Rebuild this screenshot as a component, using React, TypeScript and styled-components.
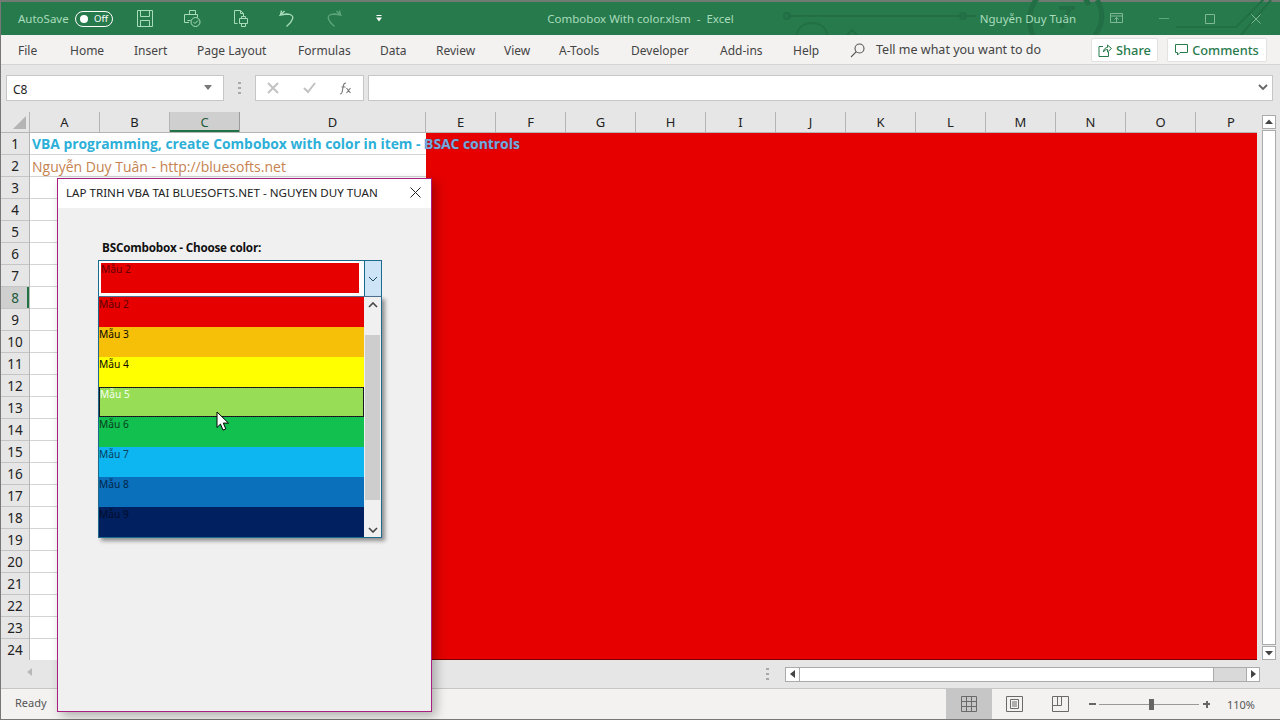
import React from 'react';
import styled, { createGlobalStyle } from 'styled-components';

const GlobalStyle = createGlobalStyle`
  html, body {
    margin: 0;
    padding: 0;
    background: #e6e6e6;
    overflow: hidden;
  }
  * { box-sizing: border-box; }
`;

const uiFont = `"Noto Sans", "Open Sans", sans-serif`;

const Page = styled.div`
  position: relative;
  width: 1280px;
  height: 720px;
  overflow: hidden;
  display: flex;
  flex-direction: column;
  font-family: ${uiFont};
  color: #333;
  background: #e6e6e6;
  border-left: 1px solid #777;
`;

const TitleBar = styled.div`
  position: relative;
  height: 35px;
  flex: none;
  display: grid;
  grid-template-columns: 1fr auto 1fr;
  align-items: center;
  background: #277a4c;
  border-top: 2px solid #6e7a72;
  color: #a9dcbc;
  font-size: 11.5px;
`;

const Circuit = styled.svg`
  position: absolute;
  left: 770px;
  top: -2px;
  pointer-events: none;
`;

const QuickAccess = styled.div`
  display: flex;
  align-items: center;
  padding-left: 17px;
`;

const AutoSave = styled.span`
  width: 57px;
`;

const Toggle = styled.div`
  width: 38px;
  height: 16px;
  margin-right: 24px;
  display: flex;
  align-items: center;
  gap: 6px;
  padding-left: 4px;
  border: 1px solid #fff;
  border-radius: 8px;
  color: #fff;
  font-size: 9.5px;
  &::before {
    content: '';
    width: 8px;
    height: 8px;
    border-radius: 50%;
    background: #fff;
  }
`;

const QatIcon = styled.svg<{ $gap: number }>`
  margin-right: ${p => p.$gap}px;
  flex: none;
`;

const DocTitle = styled.div`
  position: relative;
  text-align: center;
  white-space: pre;
`;

const WindowControls = styled.div`
  position: relative;
  display: flex;
  align-items: center;
  justify-content: flex-end;
  padding-right: 19px;
`;

const UserName = styled.span`
  margin-right: 34px;
`;

const TabsBar = styled.div`
  height: 30px;
  flex: none;
  display: flex;
  align-items: center;
  padding: 1px 0 0 17px;
  background: #f3f2f1;
  border-bottom: 1px solid #d4d4d4;
  font-size: 12px;
`;

const Tab = styled.span<{ $width: number }>`
  width: ${p => p.$width}px;
  flex: none;
  color: #444;
  white-space: nowrap;
`;

const TellMe = styled.span`
  width: 215px;
  margin: 0 0 2px 11px;
  flex: none;
  color: #444;
  font-size: 12.5px;
`;

const RibbonButton = styled.div<{ $width: number }>`
  width: ${p => p.$width}px;
  height: 24px;
  margin-right: 9px;
  flex: none;
  display: flex;
  align-items: center;
  justify-content: center;
  gap: 4px;
  background: #fff;
  border: 1px solid #e2e2e2;
  border-radius: 2px;
  color: #277a4c;
  font-size: 12.8px;
  font-weight: 500;
`;

const FormulaRow = styled.div`
  height: 47px;
  flex: none;
  display: flex;
  align-items: flex-start;
  padding: 10px 0 0 5px;
  background: #e6e6e6;
`;

const FieldBox = styled.div<{ $width: number }>`
  width: ${p => p.$width}px;
  height: 26px;
  flex: none;
  display: flex;
  align-items: center;
  background: #fff;
  border: 1px solid #c6c6c6;
  font-size: 12px;
`;

const FormulaField = styled(FieldBox)`
  margin-left: 4px;
`;

const NameValue = styled.span`
  flex: 1;
  padding: 2px 0 0 6px;
  color: #222;
`;

const Grip = styled.div`
  width: 31px;
  flex: none;
  height: 26px;
  display: flex;
  align-items: center;
  justify-content: center;
`;

const FormulaButtons = styled.div`
  width: 100%;
  display: flex;
  align-items: center;
  justify-content: space-between;
  padding: 0 11px;
`;

const Workbook = styled.div`
  height: 548px;
  flex: none;
  display: flex;
`;

const SheetPane = styled.div`
  width: 1256px;
  flex: none;
  display: flex;
  flex-direction: column;
`;

const ColumnHeader = styled.div`
  height: 21px;
  flex: none;
  display: flex;
  background: #e6e6e6;
  border-bottom: 1px solid #b5b5b5;
  font-size: 13px;
  color: #222;
`;

const CornerCell = styled.div`
  width: 29px;
  flex: none;
  display: flex;
  align-items: flex-end;
  justify-content: flex-end;
  padding: 0 3px 3px 0;
  border-right: 1px solid #b5b5b5;
  &::after {
    content: '';
    border-style: solid;
    border-width: 0 0 13px 13px;
    border-color: transparent transparent #b4b4b4 transparent;
  }
`;

const ColumnCell = styled.div<{ $width: number; $active?: boolean }>`
  width: ${p => p.$width}px;
  flex: none;
  display: flex;
  align-items: center;
  justify-content: center;
  border-right: 1px solid ${p => (p.$active ? '#9b9b9b' : '#b5b5b5')};
  background: ${p => (p.$active ? '#cfcfcf' : 'transparent')};
  color: ${p => (p.$active ? '#1f5c3c' : '#222')};
  box-shadow: ${p => (p.$active ? 'inset 0 -2px 0 #217346' : 'none')};
`;

/* the last column is cut off by the scroll bar */
const ClippedColumn = styled(ColumnCell)`
  padding-left: 10px;
  border-right: 0;
`;

const Sheet = styled.div`
  flex: 1;
  min-height: 0;
  display: flex;
  overflow: hidden;
`;

const RowHeaders = styled.div`
  width: 29px;
  flex: none;
  display: grid;
  grid-auto-rows: 22px;
  align-content: start;
  border-right: 1px solid #b5b5b5;
`;

const RowLabel = styled.div<{ $active?: boolean }>`
  display: flex;
  align-items: center;
  justify-content: center;
  font-size: 13.5px;
  color: ${p => (p.$active ? '#1f5c3c' : '#222')};
  background: ${p => (p.$active ? '#cfcfcf' : '#e6e6e6')};
  border-bottom: 1px solid #c4c4c4;
  box-shadow: ${p => (p.$active ? 'inset -2px 0 0 #217346' : 'none')};
`;

const CellArea = styled.div`
  position: relative;
  z-index: 1;
  width: 396px;
  flex: none;
  display: grid;
  grid-template-columns: 396px;
  grid-auto-rows: 22px;
  align-content: start;
  background: #fff;
`;

const CellRow = styled.div`
  min-width: 0;
  border-bottom: 1px solid #d4d4d4;
  padding-left: 2px;
  display: flex;
  align-items: center;
  white-space: nowrap;
`;

const HeadingText = styled.span`
  font-family: "Open Sans", sans-serif;
  font-weight: 700;
  font-size: 13.85px;
  color: #2db0d8;
`;

const HeadingOnRed = styled.span`
  color: #7ea8dc;
  text-shadow: 0 0 1px #223a66;
`;

const AuthorText = styled.span`
  padding-top: 1px;
  font-family: "Open Sans", sans-serif;
  font-size: 14px;
  color: #c6824f;
`;

const RedFill = styled.div`
  flex: 1;
  background: #e60000;
  border-bottom: 1px solid #700;
`;

const VScroll = styled.div`
  flex: 1;
  display: flex;
  flex-direction: column;
  padding: 3px 4px 0 5px;
  background: #e6e6e6;
`;

const VThumb = styled.div`
  flex: 1;
  margin: 1px 0;
  background: #fff;
  border: 1px solid #ababab;
`;

const ScrollButton = styled.div`
  height: 14px;
  flex: none;
  display: flex;
  align-items: center;
  justify-content: center;
  background: #fff;
  border: 1px solid #ababab;
`;

const BottomBar = styled.div`
  height: 28px;
  flex: none;
  display: flex;
  align-items: center;
  background: #e6e6e6;
  padding-left: 26px;
`;

const SheetArrow = styled.div`
  margin-bottom: 4px;
  border-style: solid;
  border-width: 4px 5px 4px 0;
  border-color: transparent #b8b8b8 transparent transparent;
`;

const BarSpacer = styled.div`
  flex: 1;
`;

const HScroll = styled.div`
  width: 475px;
  height: 15px;
  flex: none;
  margin-right: 20px;
  margin-left: 16px;
  display: flex;
  background: #d9d9d9;
  border: 1px solid #ababab;
  border-right: 0;
`;

const HButton = styled.div`
  width: 14px;
  flex: none;
  display: flex;
  align-items: center;
  justify-content: center;
  background: #fff;
  border-right: 1px solid #ababab;
`;

const HThumb = styled.div`
  width: 414px;
  flex: none;
  background: #fff;
  border-right: 1px solid #ababab;
`;

const HEnd = styled(HButton)`
  margin-left: auto;
  border-left: 1px solid #ababab;
  border-right: 1px solid #ababab;
`;

const StatusBar = styled.div`
  flex: 1;
  display: flex;
  align-items: stretch;
  background: #f3f2f1;
  border-top: 1px solid #c6c6c6;
  border-bottom: 1px solid #777;
  font-size: 11px;
  color: #555;
`;

const ReadyText = styled.span`
  padding: 0 0 4px 14px;
  flex: 1;
  align-self: center;
`;

const ViewButton = styled.div<{ $active?: boolean; $width: number }>`
  width: ${p => p.$width}px;
  flex: none;
  display: flex;
  align-items: center;
  justify-content: center;
  background: ${p => (p.$active ? '#c6c6c6' : 'transparent')};
`;

const ZoomControl = styled.div`
  flex: none;
  margin-left: 6px;
  display: flex;
  align-items: center;
  gap: 3px;
`;

const ZoomSign = styled.span`
  width: 7px;
  height: 2px;
  flex: none;
  background: #666;
  position: relative;
`;

const ZoomPlus = styled(ZoomSign)`
  margin-left: 1px;
  &::after {
    content: '';
    position: absolute;
    left: 2.5px;
    top: -2.5px;
    width: 2px;
    height: 7px;
    background: #666;
  }
`;

const ZoomTrack = styled.div`
  width: 100px;
  height: 1px;
  flex: none;
  background: #999;
  position: relative;
`;

const ZoomThumb = styled.div`
  position: absolute;
  left: 50px;
  top: -5px;
  width: 5px;
  height: 11px;
  background: #666;
`;

const ZoomValue = styled.span`
  width: 62px;
  margin-right: 8px;
  flex: none;
  align-self: center;
  text-align: center;
`;

/* the userform floats over the sheet */
const Dialog = styled.div`
  position: absolute;
  z-index: 2;
  left: 56px;
  top: 178px;
  width: 375px;
  height: 534px;
  display: flex;
  flex-direction: column;
  background: #f0f0f0;
  border: 1px solid #a8207f;
  box-shadow: 4px 4px 10px rgba(0, 0, 0, 0.28);
`;

const DialogTitle = styled.div`
  height: 29px;
  flex: none;
  display: flex;
  align-items: center;
  justify-content: space-between;
  padding: 0 10px 2px 8px;
  background: #fff;
  font-size: 11.6px;
  color: #222;
`;

const DialogBody = styled.div`
  position: relative;
  flex: 1;
  padding: 31px 49px 0 40px;
`;

const FieldLabel = styled.div`
  height: 20px;
  padding-left: 4px;
  font-family: "Open Sans", sans-serif;
  font-size: 11.7px;
  font-weight: 700;
  letter-spacing: -0.2px;
  color: #111;
`;

const Combo = styled.div`
  width: 284px;
  height: 37px;
  margin-top: 1px;
  display: flex;
  background: #fff;
  border: 1px solid #1c6a8e;
`;

const ComboValue = styled.div`
  width: 258px;
  height: 30px;
  margin: 2px 0 0 2px;
  flex: none;
  background: #e60000;
  font-size: 10.2px;
  line-height: 13px;
  color: #6b0000;
`;

const ComboArrow = styled.div`
  width: 17px;
  margin-left: auto;
  flex: none;
  display: flex;
  align-items: center;
  justify-content: center;
  background: #cde3f6;
  border-left: 1px solid #1c6a8e;
`;

const ColorList = styled.div`
  position: absolute;
  left: 40px;
  top: 88px;
  width: 284px;
  height: 242px;
  display: flex;
  background: #fff;
  border: 1px solid #1c6a8e;
  border-top: 1px solid #4f6d8c;
  box-shadow: 3px 3px 4px rgba(0, 0, 0, 0.4);
`;

const ItemColumn = styled.div`
  width: 265px;
  flex: none;
  display: grid;
  grid-auto-rows: 30px;
`;

const ColorItem = styled.div<{ $color: string; $text: string; $focus?: boolean }>`
  background: ${p => p.$color};
  color: ${p => p.$text};
  font-size: 10.2px;
  line-height: 15px;
  white-space: nowrap;
  outline: ${p => (p.$focus ? '1px dotted #111' : 'none')};
  outline-offset: -1px;
  padding-left: ${p => (p.$focus ? '1px' : '0')};
  box-shadow: ${p => (p.$focus ? 'inset 0 0 0 1px #223' : 'none')};
`;

const ListScroll = styled.div`
  flex: 1;
  display: flex;
  flex-direction: column;
  background: #f0f0f0;
`;

const ListArrow = styled.div`
  height: 38px;
  flex: none;
  display: flex;
  justify-content: center;
  align-items: flex-start;
  padding: 5px 0;
`;

const ListArrowEnd = styled(ListArrow)`
  align-items: flex-end;
`;

const ListThumb = styled.div`
  height: 165px;
  flex: none;
  margin: 0 1px;
  background: #cdcdcd;
`;

const Pointer = styled.svg`
  position: absolute;
  z-index: 3;
  left: 215px;
  top: 411px;
`;

const tabs: [string, number][] = [
  ['File', 52], ['Home', 64], ['Insert', 63], ['Page Layout', 101], ['Formulas', 82],
  ['Data', 56], ['Review', 68], ['View', 55], ['A-Tools', 72], ['Developer', 89],
  ['Add-ins', 73], ['Help', 57],
];

const columns: [string, number][] = [
  ['A', 70], ['B', 70], ['C', 70], ['D', 186], ['E', 70], ['F', 70], ['G', 70], ['H', 70],
  ['I', 70], ['J', 70], ['K', 70], ['L', 70], ['M', 70], ['N', 70], ['O', 70],
];

const items = [
  { name: 'Mẫu 2', color: '#e60000', text: '#5c0000' },
  { name: 'Mẫu 3', color: '#f6bf08', text: '#0a0800' },
  { name: 'Mẫu 4', color: '#ffff00', text: '#0a0a00' },
  { name: 'Mẫu 5', color: '#97dd55', text: '#f4fff0', focus: true },
  { name: 'Mẫu 6', color: '#12c050', text: '#07401c' },
  { name: 'Mẫu 7', color: '#0db6f0', text: '#06405c' },
  { name: 'Mẫu 8', color: '#0a70bc', text: '#03274a' },
  { name: 'Mẫu 9', color: '#002060', text: '#000d2c' },
];

const rows = Array.from({ length: 24 }, (_, i) => i + 1);

const Chevron = ({ up, thin }: { up?: boolean; thin?: boolean }) => (
  <svg width="10" height="6" viewBox="0 0 10 6">
    <path
      d={up ? 'M1 5l4-4 4 4' : 'M1 1l4 4 4-4'}
      fill="none"
      stroke={thin ? '#1c4a62' : '#444'}
      strokeWidth={thin ? 1 : 1.6}
    />
  </svg>
);

const Tri = ({ d }: { d: string }) => (
  <svg width="8" height="8" viewBox="0 0 8 8">
    <path d={d} fill="#444" />
  </svg>
);

export default function App() {
  return (
    <Page>
      <GlobalStyle />
      <TitleBar>
        <Circuit width="510" height="35" viewBox="0 0 510 35" fill="none" stroke="#226f45" strokeWidth="2">
          <path d="M16 16H205" />
          <circle cx="16" cy="16" r="3" />
          <circle cx="192" cy="16" r="3" />
          <path d="M26 35a15 12 0 0 1 30 0M76 35l5-5 5 5" />
          <path d="M262 35a30 32 0 0 1 56-30M324 35a30 30 0 0 0 2-35" strokeWidth="5" />
          <path d="M300 6l-10 22M288 8h16" strokeWidth="4" />
          <path d="M405 27h60l32-32M470 35l30-35" />
        </Circuit>
        <QuickAccess>
          <AutoSave>AutoSave</AutoSave>
          <Toggle>Off</Toggle>
          <QatIcon $gap={31} width="16" height="17" viewBox="0 0 16 17" fill="none" stroke="#a9dcbc">
            <path d="M.5.5h15v16H.5zM3.500.5v6h9v-6M3.500 16.500v-6h9v6" />
          </QatIcon>
          <QatIcon $gap={32} width="17" height="17" viewBox="0 0 17 17" fill="none" stroke="#a9dcbc">
            <path d="M5.500 4.500v-4h6v4M.5 4.500h13v3M5 12.500H.5v-8M3.500 10.500h3" />
            <circle cx="11.500" cy="12" r="4.500" />
            <path d="M9.500 12l1.500 1.500 3-3" />
          </QatIcon>
          <QatIcon $gap={30} width="16" height="17" viewBox="0 0 16 17" fill="none" stroke="#a9dcbc">
            <path d="M4.500 13.500h-3v-13h6l3 3v3M7.500.5v3h3M6.500 8.500h8v5h-8zM8.500 8.500v-2h4v2M8.500 13.500v3h4v-3" />
          </QatIcon>
          <QatIcon $gap={31} width="16" height="17" viewBox="0 0 16 17" fill="none" stroke="#a9dcbc" strokeWidth="1.300">
            <path d="M5.500 1L1.500 5l6-1c5 0 7 2 6 5-1 3-4 6-6 7.500M1.500 5l1-4.500" />
          </QatIcon>
          <QatIcon $gap={34} width="16" height="17" viewBox="0 0 16 17" fill="none" stroke="#5ea67d" strokeWidth="1.300">
            <path d="M10.500 1l4 4-6-1c-5 0-7 2-6 5 1 3 4 6 6 7.500M14.500 5l-1-4.500" />
          </QatIcon>
          <QatIcon $gap={0} width="6" height="7" viewBox="0 0 6 7" fill="#fff">
            <path d="M.5 0h5v1h-5zM0 2.500h6L3 6.500z" />
          </QatIcon>
        </QuickAccess>
        <DocTitle>Combobox With color.xlsm  -  Excel</DocTitle>
        <WindowControls>
          <UserName>Nguyễn Duy Tuân</UserName>
          <QatIcon $gap={36} width="13" height="11" viewBox="0 0 13 11" fill="none" stroke="#7fb896">
            <path d="M.5.5h12v9H.5zM.5 3h12M6.500 9V4.500M4.500 6.500l2-2 2 2" />
          </QatIcon>
          <QatIcon $gap={36} width="10" height="3" viewBox="0 0 10 3" fill="none" stroke="#5ea67d">
            <path d="M0 1.500h10" />
          </QatIcon>
          <QatIcon $gap={36} width="10" height="10" viewBox="0 0 10 10" fill="none" stroke="#7fb896">
            <path d="M.5.5h9v9h-9z" />
          </QatIcon>
          <QatIcon $gap={0} width="10" height="10" viewBox="0 0 10 10" fill="none" stroke="#7fb896">
            <path d="M.5.5l9 9M9.500.5l-9 9" />
          </QatIcon>
        </WindowControls>
      </TitleBar>

      <TabsBar>
        {tabs.map(([label, width]) => (
          <Tab key={label} $width={width}>{label}</Tab>
        ))}
        <svg width="15" height="15" viewBox="0 0 15 15" fill="none" stroke="#555" strokeWidth="1.100">
          <circle cx="9.500" cy="5.500" r="4.500" />
          <path d="M6.300 8.700L1 14" />
        </svg>
        <TellMe>Tell me what you want to do</TellMe>
        <RibbonButton $width={67}>
          <svg width="14" height="13" viewBox="0 0 14 13" fill="none" stroke="#277a4c">
            <path d="M5 2.500H1v10h9.500V8M5.500 8c0-3 2-4.500 4-4.500V1l4 3.500-4 3.500V5.500c-2 0-3.500 1-4 2.500z" />
          </svg>
          Share
        </RibbonButton>
        <RibbonButton $width={100}>
          <svg width="13" height="12" viewBox="0 0 13 12" fill="none" stroke="#277a4c">
            <path d="M.5.5h12v8H5L2.500 11V8.500h-2z" />
          </svg>
          Comments
        </RibbonButton>
      </TabsBar>

      <FormulaRow>
        <FieldBox $width={218}>
          <NameValue>C8</NameValue>
          <svg width="26" height="6" viewBox="0 0 26 6">
            <path d="M7 0h8l-4 5z" fill="#777" />
          </svg>
        </FieldBox>
        <Grip>
          <svg width="3" height="13" viewBox="0 0 3 13" fill="#a8a8a8">
            <path d="M0 0h3v2H0zM0 5h3v2H0zM0 10h3v2H0z" />
          </svg>
        </Grip>
        <FieldBox $width={109}>
          <FormulaButtons>
            <svg width="12" height="12" viewBox="0 0 12 12" fill="none" stroke="#c2c2c2" strokeWidth="2">
              <path d="M1 1l10 10M11 1L1 11" />
            </svg>
            <svg width="13" height="12" viewBox="0 0 13 12" fill="none" stroke="#c2c2c2" strokeWidth="2">
              <path d="M1 6l4 4 7-9" />
            </svg>
            <svg width="13" height="13" viewBox="0 0 13 13" fill="none" stroke="#777" strokeWidth="1.100">
              <path d="M1 12c2 0 2-1 2.500-4L4.500 3c.4-1.500 1-2 2.500-2M2.500 5h4M7.500 6l4 5M11.500 6l-4 5" />
            </svg>
          </FormulaButtons>
        </FieldBox>
        <FormulaField $width={905}>
          <NameValue />
          <svg width="20" height="8" viewBox="0 0 20 8" fill="none" stroke="#666" strokeWidth="1.800">
            <path d="M7 1l4 4 4-4" />
          </svg>
        </FormulaField>
      </FormulaRow>

      <Workbook>
        <SheetPane>
          <ColumnHeader>
            <CornerCell />
            {columns.map(([label, width]) => (
              <ColumnCell key={label} $width={width} $active={label === 'C'}>{label}</ColumnCell>
            ))}
            <ClippedColumn $width={60}>P</ClippedColumn>
          </ColumnHeader>
          <Sheet>
            <RowHeaders>
              {rows.map(n => (
                <RowLabel key={n} $active={n === 8}>{n}</RowLabel>
              ))}
            </RowHeaders>
            <CellArea>
              {rows.map(n => (
                <CellRow key={n}>
                  {n === 1 && (
                    <HeadingText>
                      VBA programming, create Combobox with color in item - <HeadingOnRed>BSAC controls</HeadingOnRed>
                    </HeadingText>
                  )}
                  {n === 2 && <AuthorText>Nguyễn Duy Tuân - http://bluesofts.net</AuthorText>}
                </CellRow>
              ))}
            </CellArea>
            <RedFill />
          </Sheet>
        </SheetPane>
        <VScroll>
          <ScrollButton><Tri d="M4 1.500L8 6H0z" /></ScrollButton>
          <VThumb />
          <ScrollButton><Tri d="M0 2h8L4 6.500z" /></ScrollButton>
        </VScroll>
      </Workbook>

      <BottomBar>
        <SheetArrow />
        <BarSpacer />
        <svg width="3" height="13" viewBox="0 0 3 13" fill="#a8a8a8">
          <path d="M0 0h3v2H0zM0 5h3v2H0zM0 10h3v2H0z" />
        </svg>
        <HScroll>
          <HButton><Tri d="M6 0v8L1 4z" /></HButton>
          <HThumb />
          <HEnd><Tri d="M2 0v8l5-4z" /></HEnd>
        </HScroll>
      </BottomBar>

      <StatusBar>
        <ReadyText>Ready</ReadyText>
        <ViewButton $active $width={46}>
          <svg width="16" height="16" viewBox="0 0 16 16" fill="none" stroke="#6a6a6a">
            <path d="M.5.5h15v15H.5zM5.500.5v15M10.500.5v15M.5 5.500h15M.5 10.500h15" />
          </svg>
        </ViewButton>
        <ViewButton $width={45}>
          <svg width="17" height="16" viewBox="0 0 17 16" fill="none" stroke="#6a6a6a">
            <path d="M.5.5h16v15H.5zM4.500 3.500h8v9h-8zM6 6h5M6 8h5M6 10h5" />
          </svg>
        </ViewButton>
        <ViewButton $width={46}>
          <svg width="17" height="16" viewBox="0 0 17 16" fill="none" stroke="#6a6a6a">
            <path d="M.5.5h16v15H.5zM.5 9.500h9v-9M5.500.5v9" />
          </svg>
        </ViewButton>
        <ZoomControl>
          <ZoomSign />
          <ZoomTrack><ZoomThumb /></ZoomTrack>
          <ZoomPlus />
        </ZoomControl>
        <ZoomValue>110%</ZoomValue>
      </StatusBar>

      <Dialog>
        <DialogTitle>
          LAP TRINH VBA TAI BLUESOFTS.NET - NGUYEN DUY TUAN
          <svg width="11" height="11" viewBox="0 0 11 11" fill="none" stroke="#222">
            <path d="M.5.5l10 10M10.500.5l-10 10" />
          </svg>
        </DialogTitle>
        <DialogBody>
          <FieldLabel>BSCombobox - Choose color:</FieldLabel>
          <Combo>
            <ComboValue>Mẫu 2</ComboValue>
            <ComboArrow><Chevron thin /></ComboArrow>
          </Combo>
          <ColorList>
            <ItemColumn>
              {items.map(item => (
                <ColorItem key={item.name} $color={item.color} $text={item.text} $focus={item.focus}>
                  {item.name}
                </ColorItem>
              ))}
            </ItemColumn>
            <ListScroll>
              <ListArrow><Chevron up /></ListArrow>
              <ListThumb />
              <ListArrowEnd><Chevron /></ListArrowEnd>
            </ListScroll>
          </ColorList>
        </DialogBody>
      </Dialog>

      <Pointer width="14" height="21" viewBox="0 0 14 21">
        <path d="M1 1v15.500l3.500-3.400 2.500 6 2.800-1.200-2.500-5.800H12.500z" fill="#fff" stroke="#000" />
      </Pointer>
    </Page>
  );
}
